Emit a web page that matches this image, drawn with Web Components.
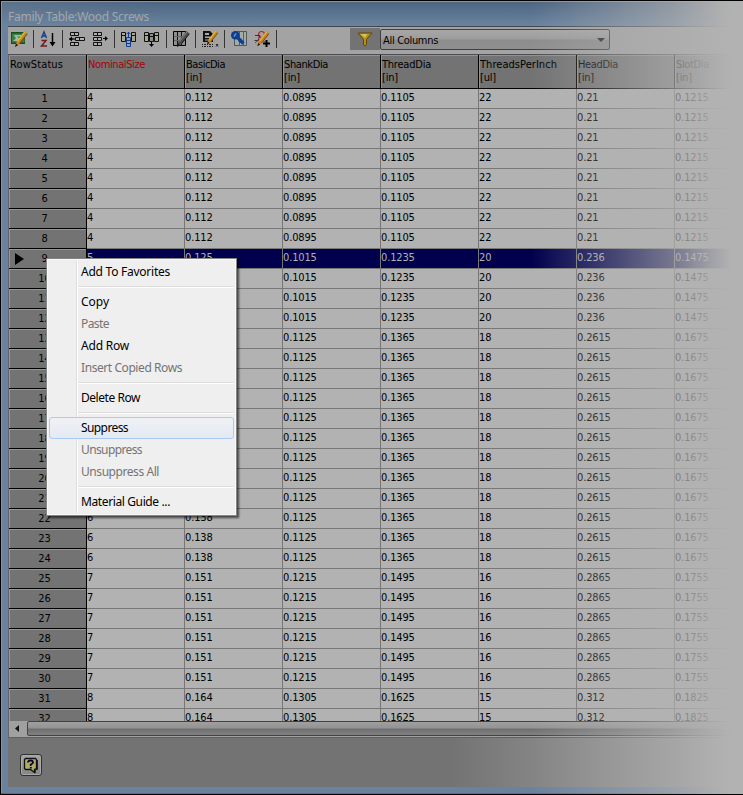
<!DOCTYPE html>
<html lang="en"><head><meta charset="utf-8"><title>Family Table</title>
<style>html,body{margin:0;height:100%;overflow:hidden;background:#b2b2b2}</style></head>
<body><family-window></family-window>
<script>
const TAHOMA = '"DejaVu Sans Condensed","DejaVu Sans",sans-serif';
const make = (name, html, init) => customElements.define(name, class extends HTMLElement {
  constructor(){ super(); this.attachShadow({mode:'open'}); }
  connectedCallback(){ this.shadowRoot.innerHTML = typeof html === 'function' ? html(this) : html; if (init) init(this); }
});

/* Label that spreads its letters over a given width */
make('fit-label', e => `<style>:host{display:inline-block;white-space:pre}span{display:inline-block}</style><span>${e.getAttribute('text')}</span>`, e => {
  const s = e.shadowRoot.querySelector('span'), w = +e.getAttribute('w');
  if (w) s.style.letterSpacing = (w - s.getBoundingClientRect().width) / e.getAttribute('text').length + 'px';
});

const pencil = (c='#c4851a', d='#6e4410', h='#dcbc48') => `<path d="M4 16l1.500-5.500L13.500 0l3 2.500L8.500 13z" fill="${c}"/><path d="M6.500 10.300L14 .8" stroke="${h}" stroke-width="1.300"/><path d="M8.600 12.600l7.700-9.800" stroke="${d}"/><path d="M4 16l1-3.500 2 1.700z" fill="#1c140e"/>`;
const cells = x => `<path d="M${x+.5} 1.500h4v9h-4zM${x+.5} 4.500h4" fill="#a8a890" stroke="#111"/>`;
const rows = y => `<path d="M1.500 ${y+.5}h8v3h-8zM5.500 ${y+.5}v3" fill="#b0b0b0" stroke="#111"/>`;
const ICONS = {
  edit:`<path d="M0 1h14v12H0z" fill="#174f22"/><path d="M1 2.500h12.500v9H1z" fill="#3b8045"/><path d="M3 4h9v1.500H6L9 8l-3 2H2l3-2.500z" fill="#a3bca2"/>${pencil()}`,
  sort:`<path d="M1.500 7L4 .8 6.500 7M2.500 5h3.500" fill="none" stroke="#173e8a" stroke-width="1.400"/><path d="M1.500 9.500h4.500L1.500 15h5.500" fill="none" stroke="#701c20" stroke-width="1.500"/><path d="M12.500 2v11" stroke="#000" stroke-width="1.500"/><path d="M9.500 11h6l-3 4.500z"/>`,
  rowin:`${rows(1)}${rows(11)}<path d="M6.500 6.500h9v3h-9zM10.500 6.500v3" fill="#b0b0b0" stroke="#111"/><path d="M0 8h6M1.500 8h3" stroke="#000"/><path d="M0 8l3-2.500v5z"/>`,
  rowout:`${rows(1)}${rows(6)}${rows(11)}<path d="M11 7.500h4" stroke="#000"/><path d="M16 7.500l-3-2.500v5z"/>`,
  colin:`${cells(0)}${cells(10)}<path d="M5.500 6.500h4v9h-4zM5.500 9.500h4M5.500 12.500h4" fill="#91a2bc" stroke="#173d86"/><path d="M7.500 1v5M5.500 3.200l2-2 2 2" fill="none" stroke="#143a9a"/>`,
  colout:`${cells(0)}${cells(10)}<path d="M5.500 2.500h4v8h-4zM5.500 5.500h4" fill="#8f8f8f" stroke="#111"/><path d="M7.500 11v3" stroke="#000"/><path d="M5 13h5l-2.500 3z"/>`,
  hatch:`<path d="M.5 .5h12v14H.5z" fill="#8f8f8f" stroke="#000"/><path d="M4.500 1v14M8.500 1v14" stroke="#111"/><path d="M1 5.500h11M1 9.500h11" stroke="#666"/>${pencil('#4c4c4c','#161616','#777')}`,
  excel:`<path d="M1 0h7l3 3v8H1z" fill="#111"/><path d="M3 2h4v2H3zM3 5.500h6v1.500H3zM3 8.500h5v1H3z" fill="#aaa"/><g transform="translate(1.500 -.5) scale(.88)">${pencil()}</g><path d="M0 13.500h12M0 15.500h12" stroke="#222" stroke-dasharray="1 1 2 1"/><path d="M14 13l2 2.500M16 13l-2 2.500" stroke="#222"/>`,
  key:`<path d="M3.500 .5h12v14h-12z" fill="#a6aca4" stroke="#345" stroke-width=".8"/><path d="M8.500 1v13M12.500 1v13" stroke="#3d4a56" stroke-width=".8"/><circle cx="4.300" cy="4.300" r="4.300" fill="#0f3f90"/><path d="M5 5l7.500 7.500M8 11l3-2.500" stroke="#0f3f90" stroke-width="3.200"/><path d="M3 5.500l2-3" stroke="#8da3c4" stroke-width="1.300"/>`,
  shape:`<circle cx="7.500" cy="3.500" r="3" fill="none" stroke="#a32631" stroke-width="1.200"/><path d="M1 4.500h5l-2 5H.5" fill="none" stroke="#27364c"/><path d="M1 12q6-6 10-1" fill="none" stroke="#96313a"/><g transform="translate(-.5 0) scale(.95)">${pencil('#cf7d20','#80420e')}</g><path d="M9 12.500h7M12.500 9v7" stroke="#000" stroke-width="2"/>`,
  funnel:`<path d="M1 2h14L9.500 8.500v5L8 15l-1.500-1V8.500z" fill="#b58e12" stroke="#5c4908"/><path d="M3.500 3h7L8 7z" fill="#d5c15b"/>`,
  help:`<path d="M2.500 1.500h10l1 1v9l-2 1v3l-4-3h-5l-1-1v-9z" fill="#aead64" stroke="#111" stroke-width="1.300"/><path d="M14.500 3v9.500h-2v3" fill="none" stroke="#222"/><path d="M5 5.500Q5 3.500 7.500 3.500T10 5.500Q10 6.500 7.700 7.500V9" fill="none" stroke="#060638" stroke-width="1.800"/><path d="M6.800 10h2v1.500h-2z" fill="#060638"/>`
};
make('tool-icon', e => `<style>:host{display:block;width:16px;height:16px;flex:none}svg{display:block;overflow:visible}</style><svg width="16" height="16" viewBox="0 0 16 16">${ICONS[e.getAttribute('name')]}</svg>`);

make('tool-bar', `<style>
:host{display:flex;align-items:center;height:28px;box-sizing:border-box;padding:0 0 3px 3px;gap:6px;background:#a3a3a3;border-top:1px solid #41464c;font:11px ${TAHOMA}}
i{width:1px;height:18px;background:#353535;flex:none}tool-icon + tool-icon{margin-left:1px}
.filter{display:flex;width:260px;height:22px;margin-left:67px}
.f{width:30px;background:#737373;display:grid;place-items:center}
.combo{flex:1;height:21px;margin-top:1px;box-sizing:border-box;border:1px solid #404040;border-radius:2px;background:linear-gradient(#a8a8a8,#9c9c9c 48%,#8d8d8d 52%,#8f8f8f);display:flex;align-items:center;justify-content:space-between;padding:1px 4px 0 2px}
b{border:4px solid transparent;border-top-color:#222;border-bottom:0}
</style><tool-icon name="edit"></tool-icon><i></i><tool-icon name="sort"></tool-icon><i></i><tool-icon name="rowin"></tool-icon><tool-icon name="rowout"></tool-icon><i></i><tool-icon name="colin"></tool-icon><tool-icon name="colout"></tool-icon><i></i><tool-icon name="hatch"></tool-icon><i></i><tool-icon name="excel"></tool-icon><i></i><tool-icon name="key"></tool-icon><tool-icon name="shape"></tool-icon><i></i>
<div class="filter"><div class="f"><tool-icon name="funnel"></tool-icon></div><div class="combo"><fit-label text="All Columns" w="55"></fit-label><b></b></div></div>`);

const COLS=[['NominalSize','',57],['BasicDia','[in]',39],['ShankDia','[in]',44],['ThreadDia','[in]',49],['ThreadsPerInch','[ul]',77],['HeadDia','[in]',40],['SlotDia','[in]',33]];
const GROUPS=[[8,['4','0.112','0.0895','0.1105','22','0.21','0.1215']],[4,['5','0.125','0.1015','0.1235','20','0.236','0.1475']],[12,['6','0.138','0.1125','0.1365','18','0.2615','0.1675']],[6,['7','0.151','0.1215','0.1495','16','0.2865','0.1755']],[2,['8','0.164','0.1305','0.1625','15','0.312','0.1825']]];
make('family-grid', () => {
  let n=0, body='';
  for (const [count,vals] of GROUPS) for (let k=0;k<count;k++){ n++;
    body+=`<div class="row${n===9?' sel':''}"><div class="rh">${n===9?'<svg width="9" height="12"><path d="M0 0l9 6-9 6z"/></svg>':''}<span>${n}</span></div>${vals.map(v=>`<div class="c">${v}</div>`).join('')}</div>`; }
  return `<style>
:host{display:block;height:667px;overflow:hidden;isolation:isolate;box-sizing:border-box;border-top:1px solid #4c4c52;border-left:1px solid #60646c;background:#b2b2b2;font:11px/13px ${TAHOMA};color:#000}
.head,.row{display:grid;grid-template-columns:77px repeat(7,98px);width:763px}
.head{height:34px;box-sizing:border-box;border-bottom:1px solid #000;background:#737373}
.head div{border-right:1px solid #000;padding:3px 0 0 2px;box-sizing:border-box;box-shadow:inset 1px 1px #929292}
.head div:first-child,.rh{padding-left:1px;width:78px;box-sizing:border-box}
.head div:not(:first-child){margin-left:1px;width:98px;padding-left:1px}
.head fit-label{display:block}.head .red{color:#a80008}
.row{height:20px;letter-spacing:-.15px}
.rh{background:#737373;border-right:1px solid #000;border-bottom:1px solid #000;box-shadow:inset 1px 1px #969696;position:relative;text-align:center;padding:3px 6px 0 0;z-index:1}
.rh svg{position:absolute;left:6px;top:4px}
.c{border-right:1px solid #777;border-bottom:1px solid #777;padding:2px 0 0 0;margin-left:1px;width:98px;box-sizing:border-box}
.sel .c{background:#00004d;color:#b2b2b2}
</style><div class="head"><div><fit-label text="RowStatus" w="53"></fit-label></div>${COLS.map((c,i)=>`<div class="${i?'':'red'}"><fit-label text="${c[0]}" w="${c[2]}"></fit-label>${c[1]?`<fit-label text="${c[1]}" w="16"></fit-label>`:''}</div>`).join('')}</div>${body}`;
});

make('scroll-bar', `<style>:host{display:flex;height:17px;box-sizing:border-box;background:#a0a0a0;border-bottom:1px solid #606060;border-left:1px solid #666}
.b{width:18px;box-sizing:border-box;padding:0 2px 1px 0;display:grid;place-items:center}.t{flex:1;border:1px solid #424242;border-radius:2px 0 0 2px;height:15px;box-sizing:border-box;background:linear-gradient(#a0a0a0,#939393 45%,#6f6f72 55%,#818181)}</style>
<div class="b"><svg width="4" height="7"><path d="M4 0v7L0 3.500z" fill="#111"/></svg></div><div class="t"></div>`);

const MENU=[['Add To Favorites',89],0,['Copy',28],['Paste',28,1],['Add Row',48],['Insert Copied Rows',101,1],0,['Delete Row',59],0,['Suppress',47,0,1],['Unsuppress',61,1],['Unsuppress All',78,1],0,['Material Guide ...',89]];
make('context-menu', () => `<style>
:host{position:absolute;z-index:5;left:45px;top:257px;width:191px;height:258px;box-sizing:border-box;border:1px solid #858585;padding:2px;box-shadow:2px 2px 2px #0009,inset 0 0 0 1px #f8f8f8;font:12px/22px "Noto Sans",sans-serif;color:#000;
background:linear-gradient(90deg,transparent 29px,#dedede 29px,#dedede 30px,#fff 30px,#fff 31px,transparent 31px) 0 2px/100% 252px no-repeat,#efefef}
.i{height:22px;box-sizing:border-box;padding-left:32px}
.d{color:#747474}.h{border:1px solid #aacbf2;border-radius:3px;line-height:20px;padding-left:31px;background:linear-gradient(#eff1f5,#e4e9f3)}
.s{height:8px;margin-left:29px;background:linear-gradient(transparent 3px,#dcdcdc 3px,#dcdcdc 4px,#fff 4px,#fff 5px,transparent 5px)}
</style>`+MENU.map(m=>m?`<div class="i${m[2]?' d':''}${m[3]?' h':''}"><fit-label text="${m[0]}" w="${m[1]}"></fit-label></div>`:'<div class="s"></div>').join(''));

make('family-window', `<style>
:host{display:block;position:relative;width:743px;height:795px;box-sizing:border-box;overflow:hidden;border:1px solid #000;border-right:0;box-shadow:inset 1px 1px #8593a4;padding:1px 0 0 7px;background:#6b829e}
.title{height:24px;box-sizing:border-box;margin-left:-6px;padding:6px 0 0 6px;font:12px/17px "Noto Sans",sans-serif;color:#a3a7ab;background:linear-gradient(90deg,#71839966,transparent 160px),linear-gradient(#4d6682,#6983a0)}
.foot{height:49px;box-sizing:border-box;background:#737373;padding:16px 0 0 12px}
.foot div{width:22px;height:22px;box-sizing:border-box;border:1px solid #303030;border-radius:3px;background:linear-gradient(#a6a6a6,#858585);display:grid;place-items:center;box-shadow:inset 0 0 0 1px #aaa}
.end{height:6px}.line{height:1px;background:#287f9f;margin-left:-7px}
.fade{position:absolute;inset:-1px 0;background:linear-gradient(90deg,#b2b2b200 530px,#b2b2b238 577px,#b2b2b26c 620px,#b2b2b2ae 675px,#b2b2b2e5 710px,#b2b2b2 730px);pointer-events:none}
.haze{background:linear-gradient(90deg,#b2b2b200 450px,#b2b2b244 530px,#b2b2b270 743px);inset:737px 0 7px 0}
</style><div class="title"><fit-label text="Family Table:Wood Screws" w="141"></fit-label></div>
<tool-bar></tool-bar><family-grid></family-grid><scroll-bar></scroll-bar>
<div class="foot"><div><tool-icon name="help"></tool-icon></div></div><div class="end"></div><div class="line"></div>
<div class="fade haze"></div><div class="fade"></div><context-menu></context-menu>`);
</script></body></html>
